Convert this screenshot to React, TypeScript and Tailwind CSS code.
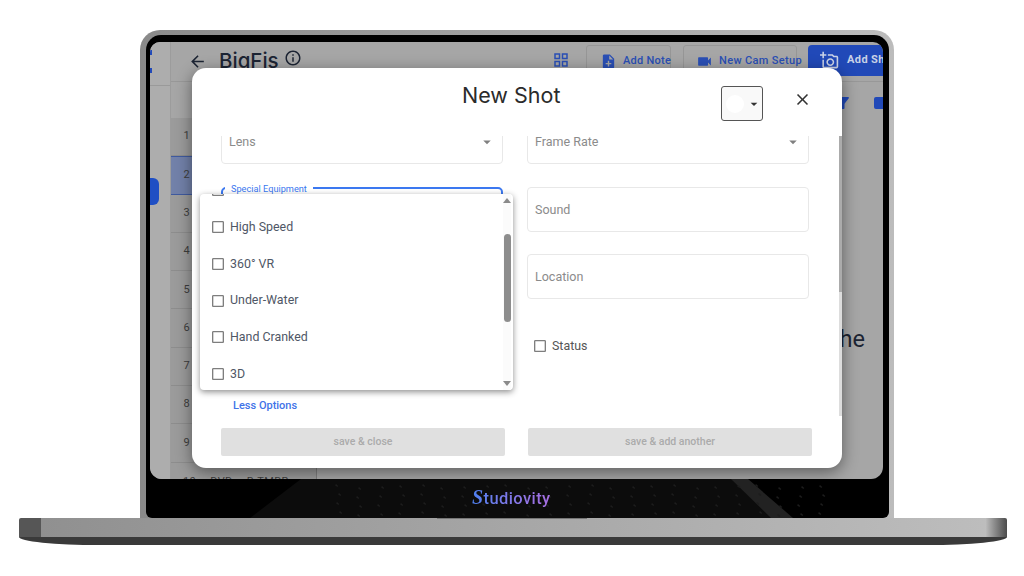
import {
  MdArrowBack,
  MdArrowDropDown,
  MdCheckBoxOutlineBlank,
  MdClose,
  MdFilterAlt,
  MdInfoOutline,
  MdNoteAdd,
  MdOutlineAddAPhoto,
  MdOutlineGridView,
  MdVideocam,
} from "react-icons/md";

const rows = ["1", "2", "3", "4", "5", "6", "7", "8", "9"];
const equipment = ["High Speed", "360° VR", "Under-Water", "Hand Cranked", "3D"];

// dots of the keyboard reflected in the bezel
const keyDots = Array.from({ length: 96 }, (_, i) => ({
  x: 190 + (i % 24) * 21 + ((i * 7) % 5),
  y: 5 + (Math.floor(i / 24) * 9) + ((i * 3) % 4),
}));

const Field = ({ label, caret }: { label: string; caret?: boolean }) => (
  <div className="flex h-[45px] w-[282px] items-center justify-between rounded-[4px] border border-[#e8e8e8] pl-[7px] pr-[6px] pt-[1px] text-[12.5px] text-[#8b8b8b]">
    <span>{label}</span>
    {caret && <MdArrowDropDown size={18} className="text-[#808080]" />}
  </div>
);

const Header = () => (
  <div className="flex h-[40px] shrink-0 items-start border-b border-[#989898] pt-[3px]">
    <div className="flex w-[381px] shrink-0 items-center pl-[17px] pt-[1px] text-[#1c2433]">
      <MdArrowBack size={19} />
      <span className="ml-[12px] font-['Inter',sans-serif] text-[20.5px] font-medium leading-[30px]">BigFis</span>
      <MdInfoOutline size={18} className="mb-[6px] ml-[5px]" />
    </div>
    <MdOutlineGridView size={18} className="mt-[6px] shrink-0 text-[#2a4fb5]" />
    <div className="ml-[16px] flex h-[32px] w-[85px] shrink-0 items-center gap-[6px] rounded-[3px] border border-[#969696] pl-[13px] text-[11px] font-medium tracking-[0.25px] text-[#2a4fb5]">
      <MdNoteAdd size={17} className="shrink-0" />
      <span className="whitespace-nowrap">Add Note</span>
    </div>
    <div className="ml-[12px] flex h-[32px] w-[114px] shrink-0 items-center gap-[6px] rounded-[3px] border border-[#969696] pl-[12px] text-[11px] font-medium tracking-[0.35px] text-[#2a4fb5]">
      <MdVideocam size={17} className="shrink-0" />
      <span className="whitespace-nowrap">New Cam Setup</span>
    </div>
    <div className="ml-[11px] flex h-[31px] w-[110px] shrink-0 items-center gap-[8px] rounded-[4px] bg-[#2149b8] pl-[12px] text-[11px] font-bold tracking-[0.4px] text-[#c9d2e6]">
      <MdOutlineAddAPhoto size={19} className="shrink-0" />
      <span className="whitespace-nowrap">Add Shot</span>
    </div>
  </div>
);

const Sheet = () => (
  <div className="flex min-h-0 flex-1">
    <div className="w-[146px] shrink-0 border-r border-[#7f7f7f] pt-[36px] text-[11px] text-[#3e3e3e]">
      {rows.map((n) => (
        <div
          key={n}
          className={
            n === "2"
              ? "flex h-[38.3px] items-center border-y border-[#3f5a9f] bg-[#7281a9]"
              : "flex h-[38.3px] items-center border-b border-[#8d8d8d] bg-[#9b9b9b]"
          }
        >
          <span className="w-[31px] text-center">{n}</span>
        </div>
      ))}
      <div className="flex h-[38px] gap-[14px] bg-[#9b9b9b] pl-[12px] pt-[11px] tracking-[0.4px]">
        <span>10</span>
        <span>DVD</span>
        <span>B.TMBR</span>
      </div>
    </div>
    <div className="flex-1 pr-[18px] text-right">
      <div className="flex h-[42px] items-center justify-end">
        <MdFilterAlt size={18} className="mr-[22px] text-[#2149b8]" />
        <div className="-mr-[18px] h-[12px] w-[9px] rounded-l-[2px] bg-[#2149b8]" />
      </div>
      <p className="mt-[200px] text-[23.5px] leading-[30px] text-[#1c2433]">the</p>
    </div>
  </div>
);

const Dropdown = () => (
  <div className="absolute left-[8px] top-[126px] z-10 flex h-[196px] w-[313px] overflow-hidden rounded-[4px] bg-white shadow-[0_2px_6px_rgba(0,0,0,0.45)]">
    <div className="-mt-[22px] flex-1 pl-[10px]">
      <div className="flex h-[36.75px] items-center">
        <MdCheckBoxOutlineBlank size={16} className="text-[#7e7e7e]" />
      </div>
      {equipment.map((item) => (
        <div key={item} className="flex h-[36.75px] items-center gap-[4px] text-[12.4px] text-[#4f5766]">
          <MdCheckBoxOutlineBlank size={16} className="text-[#7e7e7e]" />
          <span>{item}</span>
        </div>
      ))}
    </div>
    <div className="mr-[2px] flex w-[8px] flex-col items-center bg-[#fbfbfb] pb-[4px] pt-[4px]">
      <div className="h-0 w-0 border-x-[4px] border-b-[5px] border-x-transparent border-b-[#8a8a8a]" />
      <div className="mt-[31px] h-[88px] w-[7px] rounded-[4px] bg-[#8d8d8d]" />
      <div className="mt-auto h-0 w-0 border-x-[4px] border-t-[5px] border-x-transparent border-t-[#8a8a8a]" />
    </div>
  </div>
);

const Modal = () => (
  <div className="absolute left-[42px] top-[26px] flex h-[400px] w-[650px] flex-col rounded-[14px] bg-white text-[#666] shadow-[0_4px_16px_rgba(0,0,0,0.45)]">
    <div className="flex h-[68px] shrink-0 items-start">
      <h2 className="w-[529px] pl-[270px] pt-[12px] font-['Inter',sans-serif] text-[21.5px] font-normal leading-[30px] text-[#2b2b2b]">
        New Shot
      </h2>
      <div className="mt-[18px] flex h-[35px] w-[42px] items-center justify-between rounded-[3px] border border-[#555] bg-[#f9f9f9] pl-[4px]">
        <div className="h-[18px] w-[18px] rounded-full bg-white" />
        <MdArrowDropDown size={16} className="text-[#333]" />
      </div>
      <MdClose size={19} className="ml-[30px] mt-[22px] text-[#333]" />
    </div>

    <div className="relative h-[284px] shrink-0 overflow-hidden">
      <div className="absolute right-0 top-0 h-[156px] w-[3px] bg-[#ababab]" />
      <div className="absolute right-0 top-[156px] h-[124px] w-[3px] bg-[#dddddd]" />
      <div className="-mt-[17px] flex gap-[24px] pl-[29px]">
        <div>
          <Field label="Lens" caret />
          <div className="relative mt-[23px] h-[45px] w-[282px] rounded-[5px] border-2 border-[#3b78f0]">
            <span className="absolute -top-[6px] left-[2px] bg-white px-[6px] text-[9.2px] leading-[12px] text-[#3b78f0]">
              Special Equipment
            </span>
          </div>
          <p className="ml-[12px] mt-[167px] text-[11px] font-medium leading-[13px] text-[#3f73e8]">Less Options</p>
        </div>
        <div>
          <Field label="Frame Rate" caret />
          <div className="mt-[23px]">
            <Field label="Sound" />
          </div>
          <div className="mt-[22px]">
            <Field label="Location" />
          </div>
          <div className="ml-[5px] mt-[38px] flex items-center gap-[4px] text-[12.4px] text-[#555]">
            <MdCheckBoxOutlineBlank size={16} className="text-[#7e7e7e]" />
            <span>Status</span>
          </div>
        </div>
      </div>
    </div>

    <div className="flex gap-[23px] pl-[29px] pt-[8px]">
      <div className="flex h-[28px] w-[284px] items-center justify-center rounded-[2px] bg-[#e0e0e0] text-[10.5px] font-medium text-[#ababab]">
        save &amp; close
      </div>
      <div className="flex h-[28px] w-[284px] items-center justify-center rounded-[2px] bg-[#e0e0e0] text-[10.5px] font-medium text-[#ababab]">
        save &amp; add another
      </div>
    </div>

    <Dropdown />
  </div>
);

const Bezel = () => (
  <div className="relative flex h-[39px] items-center pb-[3px] pl-[322px]">
    <svg className="absolute left-[-4px] top-0" width="743" height="39" viewBox="0 0 743 39">
      <polygon points="155,0 600,0 640,39 104,39" fill="#0c0c0c" />
      <polygon points="585,0 602,0 647,39 625,39" fill="#222222" />
      {keyDots.map((d, i) => (
        <rect key={i} x={d.x} y={d.y} width="3" height="1.5" fill="#1d1d1d" transform={`rotate(40 ${d.x} ${d.y})`} />
      ))}
    </svg>
    <span className="relative bg-gradient-to-r from-[#4d80f0] to-[#a76de0] bg-clip-text text-[16.5px] font-medium tracking-[0.4px] text-transparent">
      <span className="font-['Liberation_Serif',serif] text-[20px] font-bold italic">S</span>tudiovity
    </span>
  </div>
);

export default function App() {
  return (
    <div className="h-[576px] w-[1024px] overflow-hidden bg-white pt-[30px] font-['Roboto',sans-serif]">
      {/* lid */}
      <div className="ml-[140px] h-[488px] w-[754px] rounded-t-[20px] bg-gradient-to-r from-[#8a8a8a] to-[#bcbcbc] pl-[6px] pr-[5px] pt-[5px]">
        <div className="flex h-[483px] flex-col rounded-t-[15px] rounded-b-[6px] bg-black pl-[4px] pr-[6px] pt-[7px]">
          <div className="relative flex h-[437px] shrink-0 overflow-hidden rounded-t-[10px] rounded-b-[12px] bg-[#a6a6a6]">
            <div className="flex w-[20px] shrink-0 flex-col bg-[#adadad]">
              <div className="mt-[8px] h-[5px] w-[2px] bg-[#2149b8]" />
              <div className="mt-[13px] h-[5px] w-[2px] bg-[#2149b8]" />
              <div className="mt-[12px] h-px bg-[#9a9a9a]" />
              <div className="mt-[92px] h-[27px] w-[9px] rounded-r-[6px] bg-[#1f4fc4]" />
            </div>
            <div className="flex min-w-0 flex-1 flex-col border-l border-[#9c9c9c]">
              <Header />
              <Sheet />
            </div>
            <Modal />
          </div>
          <Bezel />
        </div>
      </div>
      {/* base */}
      <div className="relative ml-[19px] w-[988px]">
        <div className="absolute left-[418px] top-0 h-px w-[150px] bg-[#777777]" />
        <div className="flex h-[19px]">
          <div className="w-[22px] rounded-tl-[2px] bg-[#565656]" />
          <div className="flex-1 bg-gradient-to-r from-[#909090] to-[#bdbdbd]" />
          <div className="w-[22px] rounded-tr-[2px] bg-gradient-to-r from-[#c0c0c0] to-[#4c4c4c]" />
        </div>
        <div className="h-[8px] rounded-b-[80px_8px] bg-[#3a3a3a]" />
      </div>
    </div>
  );
}
